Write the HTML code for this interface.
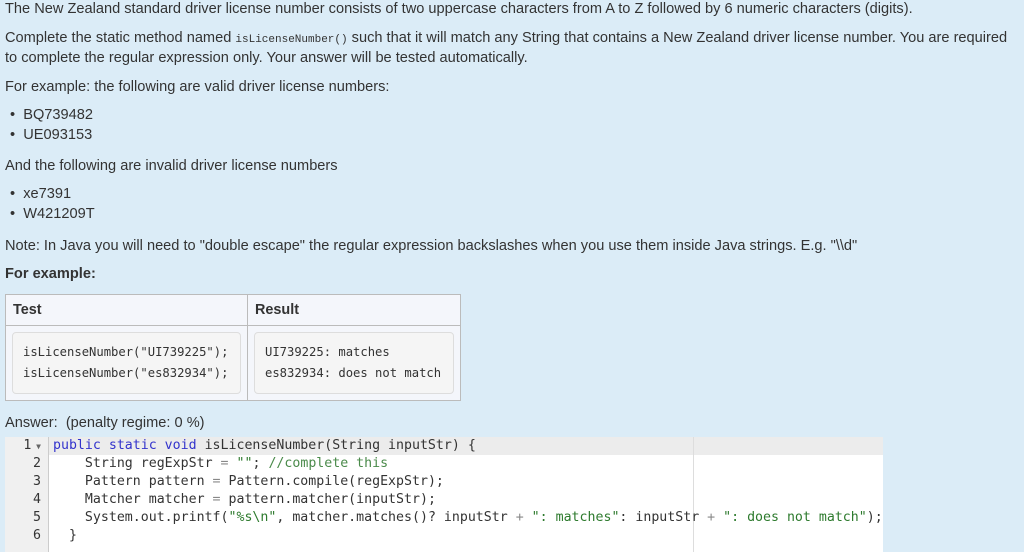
<!DOCTYPE html>
<html><head><style>
body{margin:0;background:#dbecf7;font-family:"Liberation Sans",sans-serif;font-size:14.6px;color:#333;width:1024px;height:552px;overflow:hidden;position:relative}
.t{position:absolute;left:5px;white-space:nowrap}
.m{font-family:"Liberation Mono",monospace;font-size:11px}
table{position:absolute;left:5px;top:294px;width:456px;height:107px;border-collapse:collapse;background:#f4f6fb}
td,th{border:1px solid #bbb;text-align:left;vertical-align:top;padding:0}
th{height:31px;font-size:14.4px;padding:7px 7px 0;box-sizing:border-box}
.box{margin:6px;border:1px solid #ddd;border-radius:4px;background:#f5f5f5;font-family:"DejaVu Sans Mono",monospace;font-size:12.2px;line-height:21px;padding:9px 10px;color:#333;white-space:pre}
#ed{position:absolute;left:5px;top:437px;width:878px;height:115px;background:#fff;font-family:"DejaVu Sans Mono",monospace;font-size:13.25px;line-height:18px;color:#333}
#g{position:absolute;left:0;top:0;width:43px;height:115px;background:#f0f0f0;border-right:1px solid #ccc}
.ln{position:absolute;left:0;width:36px;text-align:right;color:#333}
.cl{position:absolute;left:48px;white-space:pre}
.k{color:#3333cc}.s{color:#2d7a2d}.c{color:#4a8a4a}.o{color:#888}
</style></head><body>
<div class="t" style="top:1px">The New Zealand standard driver license number consists of two uppercase characters from A to Z followed by 6 numeric characters (digits).</div>
<div class="t" style="top:30px">Complete the static method named <span class="m">isLicenseNumber()</span> such that it will match any String that contains a New Zealand driver license number. You are required</div>
<div class="t" style="top:50px">to complete the regular expression only. Your answer will be tested automatically.</div>
<div class="t" style="top:79px">For example: the following are valid driver license numbers:</div>
<div class="t" style="top:107px;left:10px">•&nbsp;&nbsp;BQ739482</div>
<div class="t" style="top:127px;left:10px">•&nbsp;&nbsp;UE093153</div>
<div class="t" style="top:158px">And the following are invalid driver license numbers</div>
<div class="t" style="top:186px;left:10px">•&nbsp;&nbsp;xe7391</div>
<div class="t" style="top:206px;left:10px">•&nbsp;&nbsp;W421209T</div>
<div class="t" style="top:238px">Note: In Java you will need to "double escape" the regular expression backslashes when you use them inside Java strings. E.g. "\\d"</div>
<div class="t" style="top:266px;font-weight:bold">For example:</div>
<table><tr><th style="width:242px">Test</th><th>Result</th></tr>
<tr><td><div class="box">isLicenseNumber("UI739225");
isLicenseNumber("es832934");</div></td><td><div class="box">UI739225: matches
es832934: does not match</div></td></tr></table>
<div class="t" style="top:415px">Answer:&nbsp; (penalty regime: 0 %)</div>
<div id="ed">
<div style="position:absolute;left:0;top:0;width:878px;height:18px;background:#ececec"></div>
<div id="g"></div>
<div style="position:absolute;left:688px;top:0;width:1px;height:115px;background:#ddd"></div>
<div class="ln" style="top:0">1<span style="font-size:8px;color:#666"> ▼</span></div>
<div class="ln" style="top:18px">2</div><div class="ln" style="top:36px">3</div><div class="ln" style="top:54px">4</div><div class="ln" style="top:72px">5</div><div class="ln" style="top:90px">6</div>
<div class="cl" style="top:0"><span class="k">public static void</span> isLicenseNumber(String inputStr) {</div>
<div class="cl" style="top:18px">    String regExpStr <span class="o">=</span> <span class="s">""</span>; <span class="c">//complete this</span></div>
<div class="cl" style="top:36px">    Pattern pattern <span class="o">=</span> Pattern.compile(regExpStr);</div>
<div class="cl" style="top:54px">    Matcher matcher <span class="o">=</span> pattern.matcher(inputStr);</div>
<div class="cl" style="top:72px">    System.out.printf(<span class="s">"%s\n"</span>, matcher.matches()? inputStr <span class="o">+</span> <span class="s">": matches"</span>: inputStr <span class="o">+</span> <span class="s">": does not match"</span>);</div>
<div class="cl" style="top:90px">  }</div>
</div>
</body></html>
